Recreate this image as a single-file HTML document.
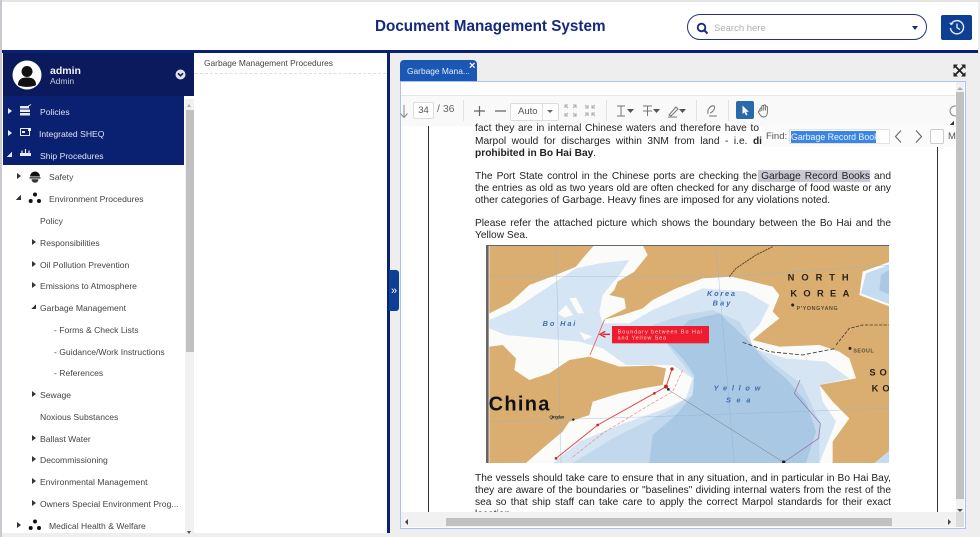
<!DOCTYPE html>
<html><head><meta charset="utf-8"><title>Document Management System</title>
<style>
html,body{margin:0;padding:0;width:980px;height:537px;overflow:hidden;background:#eee;font-family:"Liberation Sans",sans-serif}
#r{position:absolute;left:0;top:0;width:980px;height:537px;overflow:hidden;filter:blur(.3px)}
.a{position:absolute}
.t{position:absolute;white-space:nowrap;font-size:8.6px;color:#444;line-height:12px}
.g .t{margin-top:1px}
.w{color:#dfe4f2}
.d{position:absolute;left:475px;width:416px;font-size:10.2px;line-height:13px;height:13px;color:#222;text-align:justify;text-align-last:justify;white-space:nowrap}
.tri{position:absolute;width:0;height:0;border-top:3px solid transparent;border-bottom:3px solid transparent;border-left:4px solid #333}
.tri.o{border:0;width:5px;height:5px;background:linear-gradient(135deg,transparent 50%,#333 50%)}
.wh{border-left-color:#e8ecf8}
.tri.o.wh{background:linear-gradient(135deg,transparent 50%,#e8ecf8 50%)}
.sep{position:absolute;top:100px;width:1px;height:21px;background:#e2e2e2}
svg{position:absolute;overflow:hidden}
</style></head><body><div id="r">
<div class="a" style="left:0;top:0;width:980px;height:2px;background:#e4e4e4"></div>
<div class="a" style="left:2px;top:2px;width:976px;height:48px;background:#fff"></div>
<div class="a" style="left:0;top:0;width:2px;height:537px;background:#c9c9cf"></div>
<div class="a" style="left:2px;top:50px;width:976px;height:3px;background:#0b2072"></div>

<div class="a" style="left:375px;top:17px;font-size:15.25px;line-height:20px;font-weight:bold;color:#17287f;white-space:nowrap">Document Management System</div>
<div class="a" style="left:687px;top:14px;width:238px;height:24px;border:1.5px solid #24337f;border-radius:14px;background:#fff"></div>
<svg style="left:696px;top:22px" width="13" height="13" viewBox="0 0 13 13"><circle cx="5.500" cy="5.500" r="3.800" fill="none" stroke="#17287f" stroke-width="1.800"/><path d="M8.300 8.300L11.500 11.500" stroke="#17287f" stroke-width="2"/></svg>
<div class="t" style="left:714px;top:23px;color:#b0b0b0;font-size:9.500px">Search here</div>
<div class="a" style="left:912px;top:26px;width:0;height:0;border-left:3.500px solid transparent;border-right:3.500px solid transparent;border-top:4px solid #17287f"></div>
<div class="a" style="left:941px;top:15px;width:31px;height:25px;background:#0d3f95;border-radius:2px"></div>
<svg style="left:948px;top:19px" width="18" height="17" viewBox="0 0 18 17"><path d="M3.200 5A6.600 6.600 0 1 1 2.400 9" fill="none" stroke="#e6ecf6" stroke-width="1.400"/><path d="M1 3.500L3 6.200L5.800 4.600Z" fill="#e6ecf6"/><path d="M9 4.500V8.800L12 10.500" fill="none" stroke="#e6ecf6" stroke-width="1.300"/></svg>

<!-- sidebar -->
<div class="a" style="left:2px;top:53px;width:193px;height:480px;background:#fff"></div>
<div class="a" style="left:3px;top:53px;width:191px;height:43px;background:#0a1a5c"></div>
<div class="a" style="left:3px;top:96px;width:181px;height:69px;background:#0a2070"></div>
<svg style="left:12px;top:60px" width="30" height="30" viewBox="0 0 30 30"><circle cx="15" cy="15" r="14.500" fill="#fff"/><circle cx="15" cy="11.500" r="5.500" fill="#111"/><path d="M6 25C6 19 10 17.500 15 17.500S24 19 24 25C20 27.500 10 27.500 6 25Z" fill="#111"/></svg>
<div class="t" style="left:50px;top:65px;color:#f2f4fa;font-size:10.500px;font-weight:bold">admin</div>
<div class="t" style="left:50px;top:75px;color:#c5cbe0;font-size:8.500px">Admin</div>
<svg style="left:175px;top:69px" width="11" height="11" viewBox="0 0 11 11"><circle cx="5.500" cy="5.500" r="5" fill="#dfe2ea"/><path d="M3 4.300L5.500 6.800L8 4.300" fill="none" stroke="#0a1a5c" stroke-width="1.600"/></svg>
<div class="a" style="left:185px;top:99px;width:9px;height:434px;background:#f1f1f1"></div>
<div class="a" style="left:186px;top:110px;width:8px;height:242px;background:#c1c1c1"></div>
<div class="a" style="left:187px;top:104px;width:0;height:0;border-left:2.500px solid transparent;border-right:2.500px solid transparent;border-bottom:3px solid #aaa"></div>
<div class="a" style="left:187px;top:531px;width:0;height:0;border-left:2.500px solid transparent;border-right:2.500px solid transparent;border-top:3px solid #555"></div>

<div class="g">
<div class="tri wh" style="left:8px;top:108px"></div>
<svg style="left:19px;top:104px" width="13" height="13" viewBox="0 0 13 13"><path d="M1 2h9v2.500H1zM1 5.500h10v2.500H1zM1 9h10v2.500H1z" fill="#e8ecf8"/><path d="M8 3L12 .5" stroke="#e8ecf8"/></svg>
<div class="t w" style="left:40px;top:105px">Policies</div>
<div class="tri wh" style="left:8px;top:130px"></div>
<svg style="left:19px;top:126px" width="13" height="13" viewBox="0 0 13 13"><rect x="1.500" y="2.500" width="9" height="7" fill="none" stroke="#e8ecf8"/><path d="M3 5h3v2H3z" fill="#e8ecf8"/><path d="M9 2h3v3H9z" fill="#e8ecf8"/></svg>
<div class="t w" style="left:39px;top:127px">Integrated SHEQ</div>
<div class="tri o wh" style="left:7px;top:152px"></div>
<svg style="left:19px;top:147px" width="13" height="13" viewBox="0 0 13 13"><path d="M1 6h11v3H1z" fill="#e8ecf8"/><path d="M3 6V3.500M6.500 6V2M10 6V3.500" stroke="#e8ecf8" stroke-width="1.200"/></svg>
<div class="t w" style="left:40px;top:149px">Ship Procedures</div>

<div class="tri" style="left:17px;top:173px"></div>
<svg style="left:28px;top:170px" width="14" height="14" viewBox="0 0 14 14"><path d="M2 6.500A5 5 0 0 1 12 6.500Z" fill="#111"/><path d="M1.500 7.300h11v1.200h-11z" fill="#111"/><path d="M3.500 9.300h7a3.500 3.500 0 0 1-7 0Z" fill="#333"/></svg>
<div class="t" style="left:49px;top:170px">Safety</div>
<div class="tri o" style="left:16px;top:195px"></div>
<svg style="left:28px;top:191px" width="14" height="14" viewBox="0 0 14 14"><circle cx="7" cy="3.500" r="2" fill="#111"/><circle cx="2.700" cy="10" r="2" fill="#111"/><circle cx="11" cy="10" r="2" fill="#111"/></svg>
<div class="t" style="left:49px;top:192px">Environment Procedures</div>
<div class="t" style="left:40px;top:214px">Policy</div>
<div class="tri" style="left:32px;top:239px"></div><div class="t" style="left:40px;top:236px">Responsibilities</div>
<div class="tri" style="left:32px;top:261px"></div><div class="t" style="left:40px;top:258px">Oil Pollution Prevention</div>
<div class="tri" style="left:32px;top:282px"></div><div class="t" style="left:40px;top:279px">Emissions to Atmosphere</div>
<div class="tri o" style="left:31px;top:304px"></div><div class="t" style="left:40px;top:301px">Garbage Management</div>
<div class="t" style="left:54px;top:323px">- Forms &amp; Check Lists</div>
<div class="t" style="left:54px;top:345px">- Guidance/Work Instructions</div>
<div class="t" style="left:54px;top:366px">- References</div>
<div class="tri" style="left:32px;top:391px"></div><div class="t" style="left:40px;top:388px">Sewage</div>
<div class="t" style="left:40px;top:410px">Noxious Substances</div>
<div class="tri" style="left:32px;top:435px"></div><div class="t" style="left:40px;top:432px">Ballast Water</div>
<div class="tri" style="left:32px;top:456px"></div><div class="t" style="left:40px;top:453px">Decommissioning</div>
<div class="tri" style="left:32px;top:478px"></div><div class="t" style="left:40px;top:475px">Environmental Management</div>
<div class="tri" style="left:32px;top:500px"></div><div class="t" style="left:40px;top:497px">Owners Special Environment Prog...</div>
<div class="tri" style="left:17px;top:522px"></div>
<svg style="left:28px;top:518px" width="14" height="14" viewBox="0 0 14 14"><circle cx="7" cy="3.500" r="2" fill="#111"/><circle cx="2.700" cy="10" r="2" fill="#111"/><circle cx="11" cy="10" r="2" fill="#111"/></svg>
<div class="t" style="left:49px;top:519px">Medical Health &amp; Welfare</div>
</div>

<!-- middle -->
<div class="a" style="left:195px;top:53px;width:192px;height:480px;background:#fff"></div>
<div class="t" style="left:204px;top:57px;font-size:8.400px">Garbage Management Procedures</div>
<div class="a" style="left:195px;top:73px;width:191px;border-top:1px dashed #ddd"></div>
<div class="a" style="left:387px;top:53px;width:3px;height:480px;background:#0b2072"></div>
<div class="a" style="left:389px;top:270px;width:10px;height:41px;background:#0d3f95;border-radius:0 3px 3px 0"></div>
<div class="a" style="left:389px;top:284px;width:10px;text-align:center;font-size:11px;line-height:14px;color:#fff">»</div>

<!-- tab -->
<div class="a" style="left:400px;top:60px;width:77px;height:22px;background:#1b57b5;border-radius:4px 4px 0 0"></div>
<div class="t" style="left:407px;top:65px;color:#e6edf8;font-size:8.400px">Garbage Mana...</div>
<div class="t" style="left:469px;top:61px;color:#fff;font-size:11px;font-weight:bold;line-height:10px">×</div>
<svg style="left:953px;top:64px" width="13" height="13" viewBox="0 0 13 13"><path d="M1 1L12 12M12 1L1 12" stroke="#222" stroke-width="1.800"/><path d="M0.500 .5h4.500L.5 5zM12.500 .5H8l4.500 4.500zM.5 12.500h4.500L.5 8zM12.500 12.500H8l4.500-4.500z" fill="#222"/></svg>

<!-- viewer -->
<div class="a" style="left:400px;top:81px;width:564px;height:446px;border:1px solid #a9c4ea;background:#fff"></div>
<div class="a" style="left:401px;top:95px;width:555px;height:31px;background:#f9f9f9;border-top:1px solid #e6e6e6;box-sizing:border-box"></div>
<div class="a" style="left:428px;top:126px;width:1px;height:386px;background:#333"></div>
<div class="a" style="left:937px;top:126px;width:1px;height:386px;background:#333"></div>

<div class="d" style="top:122px;width:284px">fact they are in internal Chinese waters and therefore have to</div>
<div class="d" style="top:135px;width:287px">Marpol would for discharges within 3NM from land - i.e. <b>di</b></div>
<div class="d" style="top:147px;text-align-last:left"><b>prohibited in Bo Hai Bay</b>.</div>
<div class="a" style="left:758px;top:170px;width:112px;height:12px;background:#c9c9d3"></div>
<div class="d" style="top:170px">The Port State control in the Chinese ports are checking the Garbage Record Books and</div>
<div class="d" style="top:182px">the entries as old as two years old are often checked for any discharge of food waste or any</div>
<div class="d" style="top:194px;text-align-last:left">other categories of Garbage. Heavy fines are imposed for any violations noted.</div>
<div class="d" style="top:217px">Please refer the attached picture which shows the boundary between the Bo Hai and the</div>
<div class="d" style="top:229px;text-align-last:left">Yellow Sea.</div>
<div class="d" style="top:472px">The vessels should take care to ensure that in any situation, and in particular in Bo Hai Bay,</div>
<div class="d" style="top:484px">they are aware of the boundaries or "baselines" dividing internal waters from the rest of the</div>
<div class="d" style="top:496px">sea so that ship staff can take care to apply the correct Marpol standards for their exact</div>
<div class="a" style="left:475px;top:508px;width:416px;height:4px;overflow:hidden"><div style="font-size:10.200px;line-height:13px;color:#222">location.</div></div>

<!-- map -->
<svg style="left:486px;top:245px" width="403" height="218" viewBox="0 0 1209 654">
<rect width="1212" height="654" fill="#fbfbf9"/>
<path d="M10 225L90 190L210 110L270 70L340 55L430 45L400 90L350 150L340 200L350 235L430 235L500 195L570 165L650 130L780 140L850 180L820 240L790 270L800 310L900 340L1020 350L1090 400L1000 420L1010 470L1050 530L1000 654L200 654L280 590L400 540L540 490L600 460L620 400L560 360L420 360L350 310L280 290L60 270L10 250Z" fill="#d6e5f3"/>
<path d="M500 240L590 210L680 195L760 230L800 300L870 360L950 420L1000 530L1000 654L260 654L380 580L540 500L620 450L625 400L560 320Z" fill="#c2d8ec"/>
<path d="M540 290L610 225L700 205L780 280L840 350L900 400L960 470L990 560L960 654L490 654L500 570L570 510L620 450L625 390L590 340Z" fill="#a9c8e4"/>
<path d="M10 0H325L290 40L270 65L210 90L130 120L70 175L10 205Z" fill="#d9ae70"/>
<path d="M470 0H1212V50L1130 80L1120 150L1212 185V654H1040V590L1090 520L1040 470L1000 420L1110 400L1090 340L1060 320L1000 300L880 305L800 285L830 260L880 220L860 200L880 150L860 125L780 105L735 95L650 100L570 130L500 165L470 190L410 210L350 225L420 190L415 160L370 150L385 135L395 110L445 80L485 30Z" fill="#d9ae70"/>
<path d="M10 305L50 300L90 340L85 375L130 405L190 385L250 345L310 335L400 365L500 362L540 370L530 420L470 430L400 445L320 470L310 510L250 530L230 560L170 610L120 654H10Z" fill="#d9ae70"/>
<path d="M1212 58L1140 85L1125 145L1212 178Z" fill="#c5dcf0"/>
<path d="M1212 72L1185 90L1180 135L1212 150Z" fill="#a9c8e4"/>
<path d="M1165 654L1212 615V654Z" fill="#c5dcf0"/>
<path d="M215 205L240 180L262 210L235 218ZM250 160L270 158L295 205L275 205ZM280 260L320 275L295 285Z" fill="#fbfbf9"/>
<path d="M210 0L225 654M690 0L745 654M10 95L720 95L1212 60M10 530L500 515L1212 490" stroke="#8db3d3" stroke-width="1.500" fill="none" opacity=".7"/>
<path d="M730 95L750 70L810 30L860 5" stroke="#5a4a35" stroke-width="3" fill="none" stroke-dasharray="7 2"/>
<path d="M1050 300L1090 250L1130 240L1212 240" stroke="#4a3a2a" stroke-width="2.500" fill="none" stroke-dasharray="10 4"/>
<path d="M770 292L850 320L950 330L1050 310" stroke="#333" stroke-width="2.500" fill="none" stroke-dasharray="12 6"/>
<path d="M548 435L893 652" stroke="#777" stroke-width="1.500" fill="none"/>
<path d="M942 405L925 445L1003 535L998 580L893 652" stroke="#9a7aa8" stroke-width="2.500" fill="none"/>
<path d="M355 225L312 330" stroke="#e55a5a" stroke-width="2.500" fill="none"/>
<path d="M558 372L540 425L505 445L335 540L210 640" stroke="#d8484e" stroke-width="3" fill="none"/>
<path d="M590 375L560 440L490 480L350 565L255 640" stroke="#e08a8a" stroke-width="2" fill="none" stroke-dasharray="10 5"/>
<g fill="#c22"><circle cx="558" cy="372" r="5"/><circle cx="540" cy="425" r="6"/><circle cx="505" cy="445" r="4"/><circle cx="335" cy="540" r="4"/><circle cx="210" cy="640" r="4"/></g>
<circle cx="893" cy="651" r="5" fill="#222"/><circle cx="547" cy="433" r="4" fill="#222"/>
<rect x="378" y="243" width="291" height="52" fill="#ee1c2e"/>
<path d="M372 268H350M358 259L342 268L358 277" stroke="#ee1c2e" stroke-width="4" fill="none"/>
<g font-family="Liberation Sans,sans-serif">
<text x="395" y="265" font-size="16" fill="#ffd9d9" textLength="253" lengthAdjust="spacing">Boundary between Bo Hai</text>
<text x="395" y="283" font-size="16" fill="#ffd9d9" textLength="145" lengthAdjust="spacing">and Yellow Sea</text>
<text x="905" y="107" font-size="28" font-weight="bold" fill="#2b2115" textLength="183" lengthAdjust="spacing">NORTH</text>
<text x="913" y="155" font-size="28" font-weight="bold" fill="#2b2115" textLength="177" lengthAdjust="spacing">KOREA</text>
<text x="1150" y="392" font-size="28" font-weight="bold" fill="#2b2115" letter-spacing="12">SO</text>
<text x="1157" y="440" font-size="28" font-weight="bold" fill="#2b2115" letter-spacing="12">KO</text>
<text x="932" y="195" font-size="16" font-weight="bold" fill="#5a4c38" textLength="123" lengthAdjust="spacing">P'YONGYANG</text>
<text x="1102" y="323" font-size="16" font-weight="bold" fill="#5a4c38" textLength="61" lengthAdjust="spacing">SEOUL</text>
<text x="8" y="497" font-size="60" font-weight="bold" fill="#111" textLength="182" lengthAdjust="spacing">China</text>
<g font-style="italic" fill="#3d6cae" font-weight="bold">
<text x="170" y="243" font-size="22" textLength="98" lengthAdjust="spacing">Bo Hai</text>
<text x="663" y="153" font-size="22" textLength="84" lengthAdjust="spacing">Korea</text>
<text x="680" y="182" font-size="22" textLength="53" lengthAdjust="spacing">Bay</text>
<text x="683" y="437" font-size="22" textLength="140" lengthAdjust="spacing">Yellow</text>
<text x="720" y="473" font-size="22" textLength="73" lengthAdjust="spacing">Sea</text>
</g>
<text x="190" y="521" font-size="13" fill="#333" font-weight="bold" textLength="45" lengthAdjust="spacing">Qingdao</text>
</g>
<circle cx="920" cy="180" r="4.500" fill="#222"/><circle cx="1092" cy="310" r="4.500" fill="#222"/><circle cx="262" cy="524" r="3.500" fill="#222"/>
<rect width="1212" height="3" fill="#666"/>
<rect width="8" height="654" fill="#666"/>
</svg>

<!-- toolbar -->
<svg style="left:399px;top:104px" width="10" height="16" viewBox="0 0 10 16"><path d="M5 1V13M1.500 9.500L5 13.500L8.500 9.500" fill="none" stroke="#888" stroke-width="1"/></svg>
<div class="a" style="left:413px;top:102px;width:19px;height:15px;border:1px solid #ddd;border-radius:2px;background:#fff;text-align:center;font-size:9.500px;line-height:15px;color:#555">34</div>
<div class="t" style="left:437px;top:103px;font-size:10.500px;color:#666">/ 36</div>
<div class="sep" style="left:463px"></div>
<svg style="left:473px;top:104px" width="34" height="14" viewBox="0 0 34 14"><path d="M6.500 2V12M1 7H12M22 7H33" stroke="#666" stroke-width="1.200"/></svg>
<div class="a" style="left:510px;top:103px;width:47px;height:16px;border:1px solid #ddd;border-radius:2px;background:#fff"></div>
<div class="a" style="left:542px;top:103px;width:1px;height:18px;background:#ddd"></div>
<div class="t" style="left:518px;top:106px;font-size:9.500px;color:#555">Auto</div>
<div class="a" style="left:547px;top:110px;width:0;height:0;border-left:3px solid transparent;border-right:3px solid transparent;border-top:3.500px solid #666"></div>
<svg style="left:564px;top:104px" width="33" height="14" viewBox="0 0 33 14"><path d="M1 4V1H4M9 1H12V4M1 9V12H4M12 9V12H9M1 1L4 4M12 1L9 4M1 12L4 9M12 12L9 9" fill="none" stroke="#aaa"/><path d="M24 1V4H21M28 1V4H31M24 12V9H21M28 12V9H31M21 1L24 4M31 1L28 4M21 12L24 9M31 12L28 9" fill="none" stroke="#aaa"/></svg>
<div class="sep" style="left:606px"></div>
<svg style="left:615px;top:104px" width="72" height="14" viewBox="0 0 72 14"><path d="M2 2H10M6 2V12M2 12H10" fill="none" stroke="#777"/><path d="M12 5H19L15.500 9Z" fill="#555"/><path d="M28 2H37M32.500 2V12M28 7H37" fill="none" stroke="#777"/><path d="M38 5H45L41.500 9Z" fill="#555"/><path d="M54 11L61 3L63 5L56 12ZM53 13H62" fill="none" stroke="#777"/><path d="M64 5H71L67.500 9Z" fill="#555"/></svg>
<div class="sep" style="left:696px"></div>
<svg style="left:706px;top:104px" width="12" height="14" viewBox="0 0 12 14"><path d="M2 10C1 5 5 1 8 2C10 4 7 8 4 9M3 12H11" fill="none" stroke="#777"/></svg>
<div class="sep" style="left:728px"></div>
<div class="a" style="left:736px;top:101px;width:18px;height:18px;background:#2a6aa8;border-radius:2px"></div>
<svg style="left:741px;top:105px" width="9" height="11" viewBox="0 0 9 11"><path d="M1.500 .5V9L3.500 7.300L5 10.500L6.500 9.800L5 6.800H7.800Z" fill="#fff"/></svg>
<svg style="left:757px;top:103px" width="14" height="15" viewBox="0 0 14 15"><path d="M3 8V5.500a1 1 0 0 1 1.800 0V3a1 1 0 0 1 1.900 0V2.500a1 1 0 0 1 1.900 0V3.500a1 1 0 0 1 1.800 .5V9C10.400 12 9 14 6.500 14C4.500 14 3.500 12.500 1.500 9.500C1 8 2.500 7.500 3 8ZM4.800 5.500V8M6.700 3V7.500M8.600 3V7.500" fill="none" stroke="#666" stroke-width=".9"/></svg>
<svg style="left:947px;top:103px" width="9" height="16" viewBox="0 0 9 16"><circle cx="8" cy="8" r="5" fill="none" stroke="#888"/></svg>
<!-- find bar -->
<div class="a" style="left:762px;top:125px;width:194px;height:22px;background:#fbfbfb"></div>
<div class="a" style="left:949px;top:121px;width:5px;height:4px;background:linear-gradient(135deg,transparent 50%,#333 50%)"></div>
<div class="t" style="left:766px;top:131px;font-size:9.500px;color:#555">Find:</div>
<div class="a" style="left:789px;top:129px;width:99px;height:13px;border:1px solid #e2e2e2;background:#fff"></div>
<div class="a" style="left:791px;top:131px;width:85px;height:12px;background:#3b86e4"></div>
<div class="t" style="left:791px;top:131px;font-size:8.800px;color:#eaf2ff">Garbage Record Book</div>
<svg style="left:893px;top:129px" width="32" height="15" viewBox="0 0 32 15"><path d="M8 1.500L2.500 7.500L8 13.500M23 1.500L28.500 7.500L23 13.500" fill="none" stroke="#666" stroke-width="1.100"/></svg>
<div class="a" style="left:930px;top:129px;width:12px;height:13px;border:1px solid #ccc;border-radius:2px;background:#fff"></div>
<div class="t" style="left:948px;top:131px;font-size:9.500px;color:#555">M</div>

<!-- scrollbars -->
<div class="a" style="left:956px;top:82px;width:8px;height:430px;background:#f1f1f1"></div>
<div class="a" style="left:956px;top:92px;width:8px;height:407px;background:#c1c1c1"></div>
<div class="a" style="left:957px;top:87px;width:0;height:0;border-left:3px solid transparent;border-right:3px solid transparent;border-bottom:3px solid #aaa"></div>
<div class="a" style="left:957px;top:509px;width:0;height:0;border-left:3px solid transparent;border-right:3px solid transparent;border-top:3px solid #555"></div>
<div class="a" style="left:401px;top:512px;width:563px;height:15px;background:#f1f1f1"></div>
<div class="a" style="left:446px;top:518px;width:446px;height:8px;background:#c1c1c1"></div>
<div class="a" style="left:405px;top:519px;width:0;height:0;border-top:3px solid transparent;border-bottom:3px solid transparent;border-right:3px solid #444"></div>
<div class="a" style="left:948px;top:519px;width:0;height:0;border-top:3px solid transparent;border-bottom:3px solid transparent;border-left:3px solid #444"></div>
<div class="a" style="left:956px;top:512px;width:8px;height:15px;background:#dcdcdc"></div>
</div></body></html>
